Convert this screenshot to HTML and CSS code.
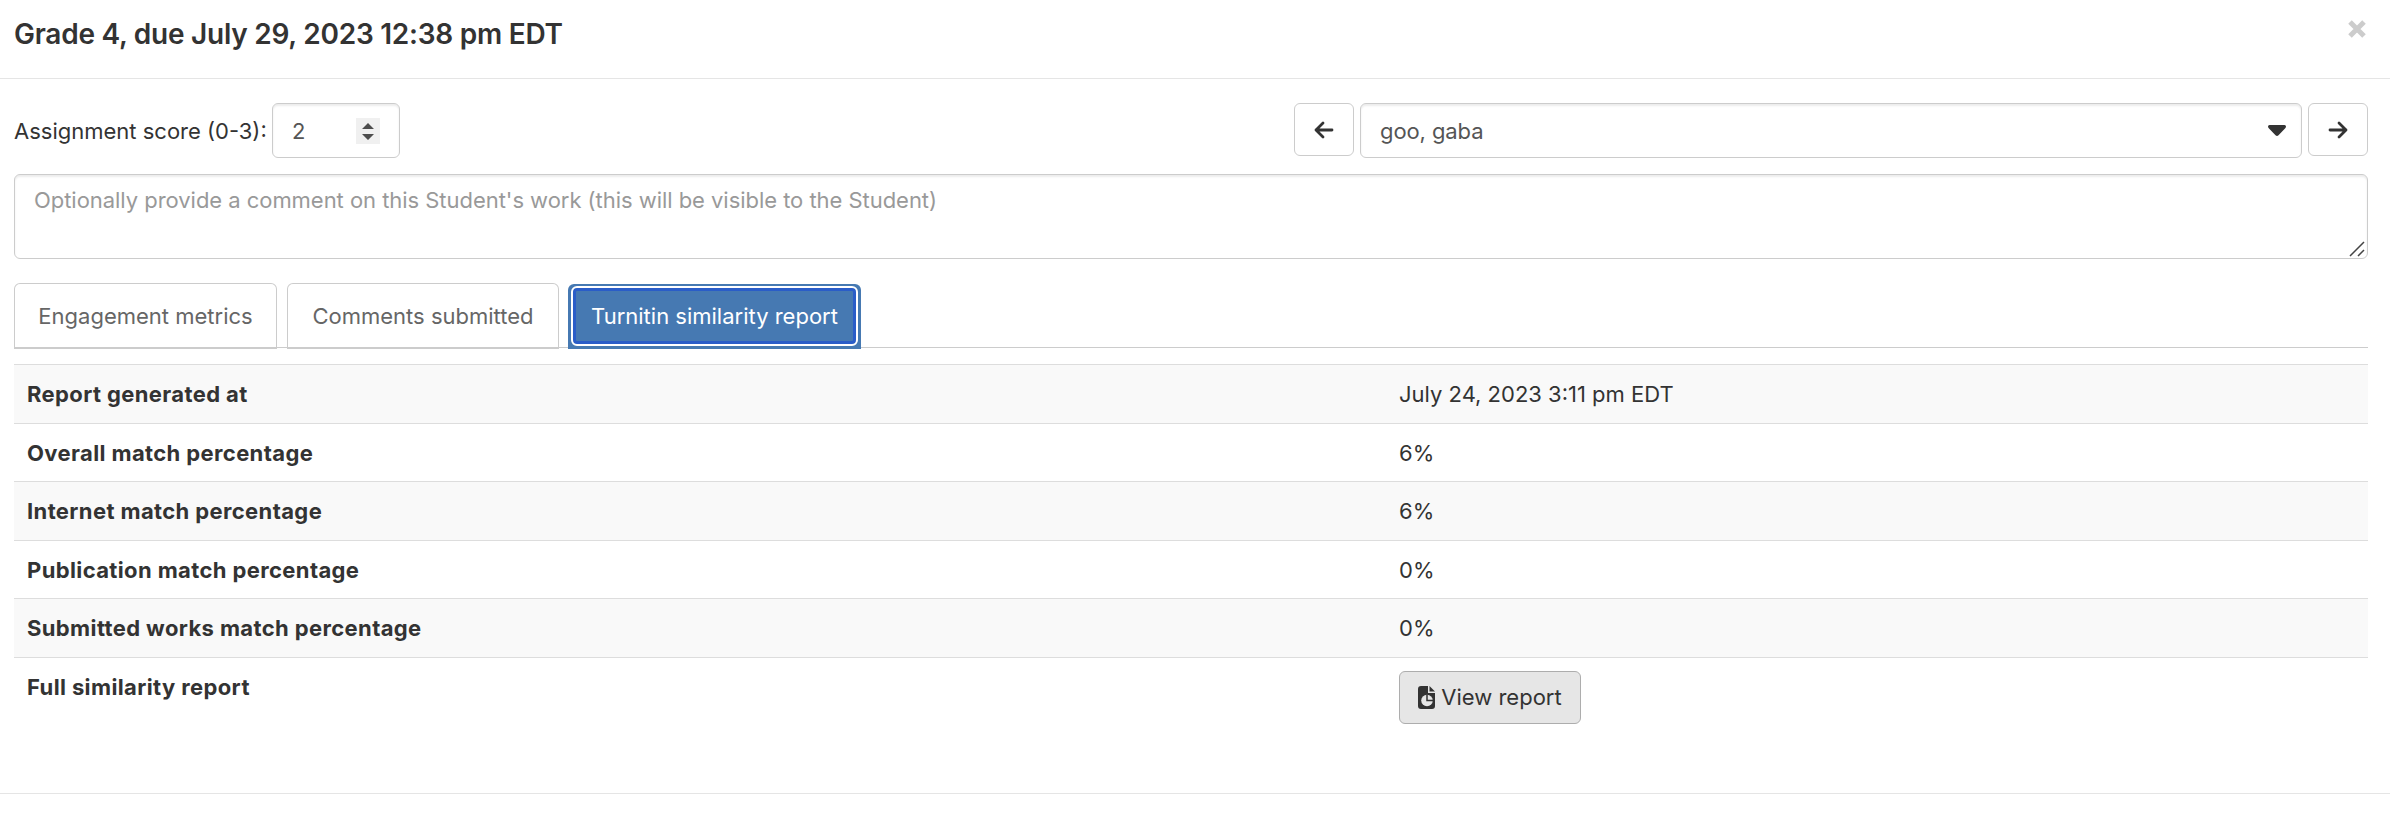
FILE: index.html
```html
<!DOCTYPE html>
<html lang="en">
<head>
  <meta charset="UTF-8">
  <meta name="viewport" content="width=device-width, initial-scale=1.0">
  <title>Grade 4</title>
  <link rel="stylesheet" href="styles.css">
</head>
<body>
  <div class="modal-header">
    <h1 class="modal-title"><span>Grade 4, due July 29, 2023 12:38 pm EDT</span></h1>
    <button class="close" aria-label="Close">
      <svg width="20" height="20" viewBox="0 0 20 20"><path d="M3 3L17 17M17 3L3 17" stroke="#ccc" stroke-width="5" fill="none"/></svg>
    </button>
  </div>

  <div class="modal-body">
    <div class="grade-row">
      <label class="score-label" for="score">Assignment score (0-3):</label>
      <div class="field score">
        <span id="score">2</span>
        <span class="spinner">
          <svg width="24" height="26" viewBox="0 0 24 26"><path d="M6 11L12 5L18 11ZM6 16L12 22L18 16Z" fill="#4d4d4d"/></svg>
        </span>
      </div>
      <div class="student-nav">
        <button class="btn arrow" aria-label="Previous student">
          <svg width="20" height="18" viewBox="0 0 20 18"><path d="M18 9H2M9 2L2 9L9 16" /></svg>
        </button>
        <div class="field student">
          <span>goo, gaba</span>
          <svg width="18" height="12" viewBox="0 0 18 12"><path d="M1.5 0H16.5Q18 0 18 1.5Q18 2.5 17 3.5L10.5 10.2Q9 11.7 7.5 10.2L1 3.5Q0 2.5 0 1.5Q0 0 1.5 0Z" fill="#333"/></svg>
        </div>
        <button class="btn arrow" aria-label="Next student">
          <svg width="20" height="18" viewBox="0 0 20 18"><path d="M2 9H18M11 2L18 9L11 16" /></svg>
        </button>
      </div>
    </div>

    <div class="field comment">
      <span>Optionally provide a comment on this Student's work (this will be visible to the Student)</span>
      <svg class="grip" width="16" height="16" viewBox="0 0 16 16"><path d="M1 15L15 1M9 15L15 9" stroke="#444" stroke-width="1.5" fill="none"/></svg>
    </div>

    <ul class="tabs">
      <li class="tab"><a>Engagement metrics</a></li>
      <li class="tab"><a>Comments submitted</a></li>
      <li class="tab active"><a>Turnitin similarity report</a></li>
    </ul>

    <table class="report">
      <tr><th>Report generated at</th><td>July 24, 2023 3:11 pm EDT</td></tr>
      <tr><th>Overall match percentage</th><td>6%</td></tr>
      <tr><th>Internet match percentage</th><td>6%</td></tr>
      <tr><th>Publication match percentage</th><td>0%</td></tr>
      <tr><th>Submitted works match percentage</th><td>0%</td></tr>
      <tr>
        <th>Full similarity report</th>
        <td class="action">
          <button class="btn view-report">
            <svg width="17" height="23" viewBox="0 0 17 23">
              <path d="M3 0H10V7H17V20Q17 23 14 23H3Q0 23 0 20V3Q0 0 3 0Z" fill="#333"/>
              <path d="M11.5 0L17 5.5H11.5Z" fill="#333"/>
              <circle cx="9" cy="14.5" r="5.8" fill="#e6e6e6"/>
              <path d="M9 8.5V14.5H15" fill="none" stroke="#333" stroke-width="1.5"/>
            </svg>
            <span>View report</span>
          </button>
        </td>
      </tr>
    </table>
  </div>

  <div class="modal-footer"></div>
</body>
</html>
```
FILE: styles.css
```css
* {
  box-sizing: border-box;
}
body {
  margin: 0;
  background-color: #fff;
  color: #333;
  font-family: Inter, sans-serif;
  font-size: 22px;
  line-height: 28px;
}
.modal-header {
  display: flex;
  justify-content: space-between;
  align-items: flex-start;
  height: 79px;
  padding: 14px 23px 0 14px;
  border-bottom: 1px solid #e5e5e5;
}
.modal-title {
  margin: 0;
  font-size: 28px;
  font-weight: 600;
  line-height: 41px;
  letter-spacing: -0.25px;
}
.close {
  display: flex;
  margin-top: 5px;
  padding: 0;
  border: none;
  background: none;
}
.modal-body {
  height: 714px;
  padding: 24px 22px 0 14px;
}
.grade-row {
  display: flex;
  align-items: flex-start;
}
.score-label {
  width: 258px;
  line-height: 56px;
  white-space: nowrap;
}
.field {
  border: 1px solid #ccc;
  border-radius: 6px;
  background-color: #fff;
  box-shadow: inset 0 2px 2px rgba(0, 0, 0, 0.075);
  color: #555;
}
.score {
  display: flex;
  justify-content: space-between;
  align-items: center;
  width: 128px;
  height: 55px;
  padding: 0 19px 0 19px;
}
.spinner {
  display: flex;
  height: 26px;
  background-color: #f0f0f0;
}
.student-nav {
  display: flex;
  gap: 6px;
  width: 1074px;
  margin-left: auto;
}
.btn {
  display: flex;
  align-items: center;
  justify-content: center;
  height: 53px;
  border: 1px solid #ccc;
  border-radius: 6px;
  background-color: #fff;
  color: #333;
  font: inherit;
}
.arrow {
  width: 60px;
  padding: 0;
}
.arrow path {
  fill: none;
  stroke: #333;
  stroke-width: 2.8;
  stroke-linecap: round;
  stroke-linejoin: round;
}
.student {
  display: flex;
  flex: 1;
  justify-content: space-between;
  align-items: center;
  height: 55px;
  padding: 0 15px 0 19px;
  letter-spacing: -0.1px;
}
.comment {
  position: relative;
  height: 85px;
  margin-top: 15px;
  padding: 11px 19px;
  color: #999;
  letter-spacing: -0.04px;
}
.grip {
  position: absolute;
  right: 2px;
  bottom: 1px;
}
.tabs {
  display: flex;
  height: 65px;
  margin: 24px 0 0;
  padding: 0;
  border-bottom: 1px solid #ccc;
  list-style: none;
}
.tab {
  height: 66px;
  margin-right: 9px;
  border: 1px solid #ccc;
  border-bottom-width: 2px;
  border-radius: 6px 6px 0 0;
  color: #666;
  line-height: 64px;
  text-align: center;
  white-space: nowrap;
}
.tab:nth-child(1) {
  width: 263px;
  margin-right: 10px;
}
.tab:nth-child(2) {
  width: 272px;
}
.tab.active {
  width: 293px;
  height: 65px;
  margin-top: 1px;
  padding: 2px 3px;
  border: none;
  background-color: #4679b2;
  color: #fff;
}
.active a {
  display: block;
  height: 60px;
  border: 2px solid #fff;
  border-radius: 6px;
  box-shadow: inset 0 0 0 3px #2a5dc8;
  line-height: 56px;
}
.report {
  width: 100%;
  margin-top: 16px;
  border-collapse: collapse;
  table-layout: fixed;
}
.report th,
.report td {
  height: 58.6px;
  padding: 15px 13px 14px;
  border-top: 1px solid #ddd;
  text-align: left;
  vertical-align: top;
}
.report th {
  width: 1372px;
  font-weight: 700;
  letter-spacing: 0.38px;
}
.report tr:nth-child(odd) {
  background-color: #f9f9f9;
}
.report .action {
  padding-top: 13px;
}
.view-report {
  gap: 6px;
  width: 182px;
  padding: 0;
  border-color: #adadad;
  background-color: #e6e6e6;
}
.modal-footer {
  height: 47px;
  border-top: 1px solid #e5e5e5;
}
```
